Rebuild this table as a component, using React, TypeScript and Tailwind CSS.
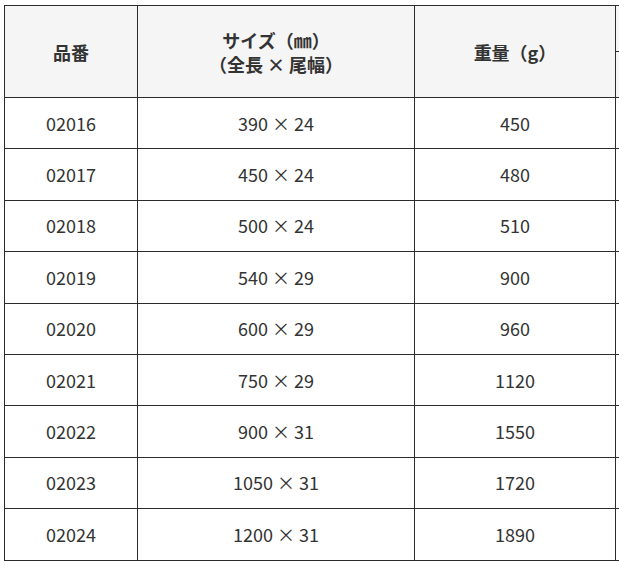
const rows = [
  ["02016", "390 × 24", "450"],
  ["02017", "450 × 24", "480"],
  ["02018", "500 × 24", "510"],
  ["02019", "540 × 29", "900"],
  ["02020", "600 × 29", "960"],
  ["02021", "750 × 29", "1120"],
  ["02022", "900 × 31", "1550"],
  ["02023", "1050 × 31", "1720"],
  ["02024", "1200 × 31", "1890"],
] as const;

const cell = "border border-[#2b2b2b] text-center align-middle";
const head = `${cell} bg-[#f5f5f5] font-bold leading-6`;

export default function App() {
  return (
    <div
      className="w-[619px] h-[573px] overflow-hidden bg-white pl-[4px] pt-[5px] text-[#333] text-[18px]"
      style={{ fontFamily: '"Noto Sans CJK JP", "Noto Sans", sans-serif' }}
    >
      <table className="table-fixed border-collapse w-[812px]">
        <colgroup>
          <col className="w-[133px]" />
          <col className="w-[277px]" />
          <col className="w-[201px]" />
          <col className="w-[201px]" />
        </colgroup>
        <thead>
          <tr className="h-[46px]">
            <th rowSpan={2} className={head}>
              品番
            </th>
            <th rowSpan={2} className={head}>
              サイズ（㎜）
              <br />
              （全長 × 尾幅）
            </th>
            <th rowSpan={2} className={head}>
              重量（g）
            </th>
            <th className={head}></th>
          </tr>
          <tr className="h-[46px]">
            <th className={head}></th>
          </tr>
        </thead>
        <tbody>
          {rows.map(([code, size, weight]) => (
            <tr key={code} className="h-[51.4px]">
              <td className={cell}>{code}</td>
              <td className={cell}>{size}</td>
              <td className={cell}>{weight}</td>
              <td className={cell}></td>
            </tr>
          ))}
        </tbody>
      </table>
    </div>
  );
}
